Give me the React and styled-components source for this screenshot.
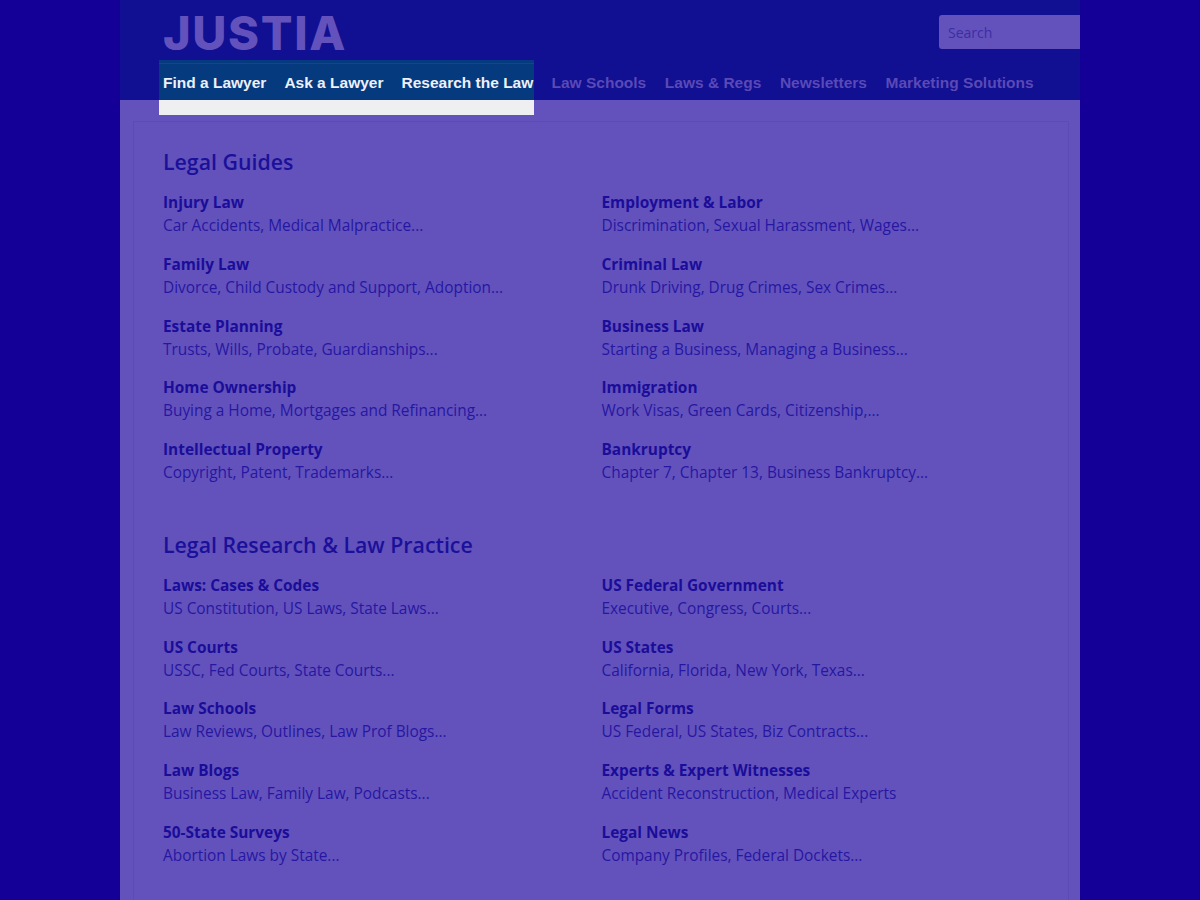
import React from 'react';
import styled, { createGlobalStyle } from 'styled-components';

const GlobalStyle = createGlobalStyle`
  html, body {
    margin: 0;
    padding: 0;
    background: #140096;
    overflow: hidden;
  }
  body {
    font-family: "Open Sans", "Liberation Sans", sans-serif;
  }
`;

const Page = styled.div`
  width: 960px;
  height: 900px;
  margin: 0 auto;
  background: #6352bb;
  overflow: hidden;
`;

const Header = styled.header`
  height: 100px;
  background: #110f92;
  display: flex;
  flex-direction: column;
`;

const TopBar = styled.div`
  height: 60px;
  display: flex;
  align-items: flex-start;
  justify-content: space-between;
  padding-left: 43px;
`;

const Logo = styled.div`
  font-family: "Inter", "Liberation Sans", sans-serif;
  font-weight: 800;
  font-size: 47px;
  line-height: 46px;
  margin-top: 10px;
  letter-spacing: 1.6px;
  color: #6352bb;
`;

const Search = styled.div`
  width: 141px;
  height: 34px;
  margin-top: 15px;
  box-sizing: border-box;
  padding-left: 9px;
  display: flex;
  align-items: center;
  background: #6352bb;
  border-radius: 3px 0 0 3px;
  font-size: 14px;
  color: #3b2da6;
`;

const Nav = styled.nav`
  height: 40px;
  display: flex;
  align-items: center;
  padding-left: 39px;
  font-family: "Liberation Sans", Arial, sans-serif;
  font-weight: 700;
  font-size: 15.5px;
`;

const Spotlight = styled.div`
  position: relative;
  height: 40px;
  width: 375px;
  box-sizing: border-box;
  padding: 6px 0 0 4px;
  background: #053a7f;
  box-shadow: inset 0 3px 0 #063a80, inset 0 4px 0 #0a4a8a;
  display: flex;
  align-items: center;
  gap: 18px;
  white-space: nowrap;

  &::after {
    content: "";
    position: absolute;
    left: 0;
    right: 0;
    top: 40px;
    height: 15px;
    background: #efeef0;
  }
`;

const Rest = styled.div`
  display: flex;
  align-items: center;
  gap: 18.6px;
  margin-left: 17.5px;
  padding-top: 6px;
  white-space: nowrap;
`;

const NavLink = styled.span`
  color: ${props => (props.$bright ? '#eef0fa' : '#5a49b6')};
`;

const Card = styled.main`
  margin: 21px 11px 0 13px;
  padding: 23px 30px 0 29px;
  border: 1px solid #5c4bb5;
  border-bottom: 0;
  height: 800px;
`;

const Section = styled.section`
  margin-bottom: 26.8px;
`;

const SectionTitle = styled.h2`
  margin: 0 0 13.3px;
  font-size: 21.3px;
  line-height: 34px;
  font-weight: 600;
  color: #1a109a;
`;

const Grid = styled.div`
  display: grid;
  grid-template-columns: 438.5px 1fr;
`;

const Item = styled.div`
  margin-bottom: 16px;
  font-size: 15.4px;
  line-height: 22.857px;
  color: #2617a3;
  white-space: nowrap;
`;

const ItemTitle = styled.div`
  font-weight: 700;
  color: #1a0d9a;
`;

const guides = [
  ['Injury Law', 'Car Accidents, Medical Malpractice...'],
  ['Employment & Labor', 'Discrimination, Sexual Harassment, Wages...'],
  ['Family Law', 'Divorce, Child Custody and Support, Adoption...'],
  ['Criminal Law', 'Drunk Driving, Drug Crimes, Sex Crimes...'],
  ['Estate Planning', 'Trusts, Wills, Probate, Guardianships...'],
  ['Business Law', 'Starting a Business, Managing a Business...'],
  ['Home Ownership', 'Buying a Home, Mortgages and Refinancing...'],
  ['Immigration', 'Work Visas, Green Cards, Citizenship,...'],
  ['Intellectual Property', 'Copyright, Patent, Trademarks...'],
  ['Bankruptcy', 'Chapter 7, Chapter 13, Business Bankruptcy...'],
];

const research = [
  ['Laws: Cases & Codes', 'US Constitution, US Laws, State Laws...'],
  ['US Federal Government', 'Executive, Congress, Courts...'],
  ['US Courts', 'USSC, Fed Courts, State Courts...'],
  ['US States', 'California, Florida, New York, Texas...'],
  ['Law Schools', 'Law Reviews, Outlines, Law Prof Blogs...'],
  ['Legal Forms', 'US Federal, US States, Biz Contracts...'],
  ['Law Blogs', 'Business Law, Family Law, Podcasts...'],
  ['Experts & Expert Witnesses', 'Accident Reconstruction, Medical Experts'],
  ['50-State Surveys', 'Abortion Laws by State...'],
  ['Legal News', 'Company Profiles, Federal Dockets...'],
];

function Links({ title, items }) {
  return (
    <Section>
      <SectionTitle>{title}</SectionTitle>
      <Grid>
        {items.map(([name, desc]) => (
          <Item key={name}>
            <ItemTitle>{name}</ItemTitle>
            {desc}
          </Item>
        ))}
      </Grid>
    </Section>
  );
}

export default function App() {
  return (
    <Page>
      <GlobalStyle />
      <Header>
        <TopBar>
          <Logo>JUSTIA</Logo>
          <Search>Search</Search>
        </TopBar>
        <Nav>
          <Spotlight>
            <NavLink $bright>Find a Lawyer</NavLink>
            <NavLink $bright>Ask a Lawyer</NavLink>
            <NavLink $bright>Research the Law</NavLink>
          </Spotlight>
          <Rest>
            <NavLink>Law Schools</NavLink>
            <NavLink>Laws &amp; Regs</NavLink>
            <NavLink>Newsletters</NavLink>
            <NavLink>Marketing Solutions</NavLink>
          </Rest>
        </Nav>
      </Header>
      <Card>
        <Links title="Legal Guides" items={guides} />
        <Links title="Legal Research & Law Practice" items={research} />
      </Card>
    </Page>
  );
}
